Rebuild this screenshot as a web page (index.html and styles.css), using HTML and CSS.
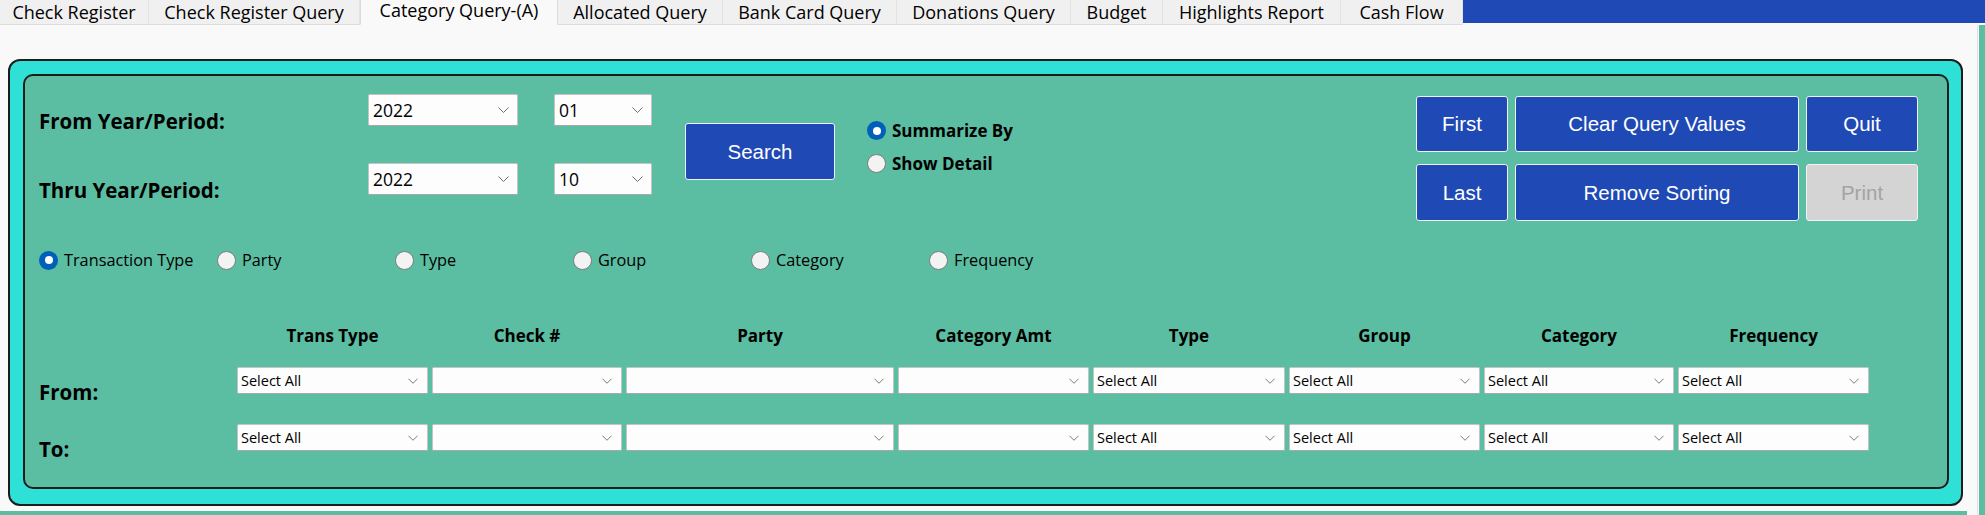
FILE: index.html
```html
<!DOCTYPE html>
<html>
<head>
<meta charset="utf-8">
<title>Category Query</title>
<link rel="stylesheet" href="styles.css">
</head>
<body>
<div class="app">
  <nav class="tabbar">
    <div class="tab w1">Check Register</div>
    <div class="tab w2">Check Register Query</div>
    <div class="tab w3 active">Category Query-(A)</div>
    <div class="tab w4">Allocated Query</div>
    <div class="tab w5">Bank Card Query</div>
    <div class="tab w6">Donations Query</div>
    <div class="tab w7">Budget</div>
    <div class="tab w8">Highlights Report</div>
    <div class="tab w9">Cash Flow</div>
    <div class="tab-fill"></div>
  </nav>
  <div class="workspace">
    <div class="stage">
      <section class="outer">
        <div class="inner">
          <div class="top-row">
            <div class="period-grid">
              <div class="big-label">From Year/Period:</div>
              <div class="select lg"><span>2022</span><svg class="chev" viewBox="0 0 11 6"><path d="M.5 .5 5.5 5.5 10.5 .5"/></svg></div>
              <div class="select lg"><span>01</span><svg class="chev" viewBox="0 0 11 6"><path d="M.5 .5 5.5 5.5 10.5 .5"/></svg></div>
              <div class="big-label">Thru Year/Period:</div>
              <div class="select lg"><span>2022</span><svg class="chev" viewBox="0 0 11 6"><path d="M.5 .5 5.5 5.5 10.5 .5"/></svg></div>
              <div class="select lg"><span>10</span><svg class="chev" viewBox="0 0 11 6"><path d="M.5 .5 5.5 5.5 10.5 .5"/></svg></div>
            </div>
            <button class="btn search-btn">Search</button>
            <div class="view-radios">
              <label class="radio-item bold"><span class="radio on"></span>Summarize By</label>
              <label class="radio-item bold"><span class="radio"></span>Show Detail</label>
            </div>
            <div class="btn-grid">
              <button class="btn">First</button>
              <button class="btn">Clear Query Values</button>
              <button class="btn">Quit</button>
              <button class="btn">Last</button>
              <button class="btn">Remove Sorting</button>
              <button class="btn disabled">Print</button>
            </div>
          </div>

          <div class="group-radios">
            <label class="radio-item"><span class="radio on"></span>Transaction Type</label>
            <label class="radio-item"><span class="radio"></span>Party</label>
            <label class="radio-item"><span class="radio"></span>Type</label>
            <label class="radio-item"><span class="radio"></span>Group</label>
            <label class="radio-item"><span class="radio"></span>Category</label>
            <label class="radio-item"><span class="radio"></span>Frequency</label>
          </div>

          <div class="filters">
            <div class="filter-grid head-row">
              <div></div>
              <div class="col-head">Trans Type</div>
              <div class="col-head">Check #</div>
              <div class="col-head">Party</div>
              <div class="col-head">Category Amt</div>
              <div class="col-head">Type</div>
              <div class="col-head">Group</div>
              <div class="col-head">Category</div>
              <div class="col-head">Frequency</div>
            </div>
            <div class="filter-grid sel-row from-row">
              <div class="row-label">From:</div>
              <div class="select sm"><span>Select All</span><svg class="chev" viewBox="0 0 11 6"><path d="M.5 .5 5.5 5.5 10.5 .5"/></svg></div>
              <div class="select sm"><span></span><svg class="chev" viewBox="0 0 11 6"><path d="M.5 .5 5.5 5.5 10.5 .5"/></svg></div>
              <div class="select sm"><span></span><svg class="chev" viewBox="0 0 11 6"><path d="M.5 .5 5.5 5.5 10.5 .5"/></svg></div>
              <div class="select sm"><span></span><svg class="chev" viewBox="0 0 11 6"><path d="M.5 .5 5.5 5.5 10.5 .5"/></svg></div>
              <div class="select sm"><span>Select All</span><svg class="chev" viewBox="0 0 11 6"><path d="M.5 .5 5.5 5.5 10.5 .5"/></svg></div>
              <div class="select sm"><span>Select All</span><svg class="chev" viewBox="0 0 11 6"><path d="M.5 .5 5.5 5.5 10.5 .5"/></svg></div>
              <div class="select sm"><span>Select All</span><svg class="chev" viewBox="0 0 11 6"><path d="M.5 .5 5.5 5.5 10.5 .5"/></svg></div>
              <div class="select sm"><span>Select All</span><svg class="chev" viewBox="0 0 11 6"><path d="M.5 .5 5.5 5.5 10.5 .5"/></svg></div>
            </div>
            <div class="filter-grid sel-row to-row">
              <div class="row-label">To:</div>
              <div class="select sm"><span>Select All</span><svg class="chev" viewBox="0 0 11 6"><path d="M.5 .5 5.5 5.5 10.5 .5"/></svg></div>
              <div class="select sm"><span></span><svg class="chev" viewBox="0 0 11 6"><path d="M.5 .5 5.5 5.5 10.5 .5"/></svg></div>
              <div class="select sm"><span></span><svg class="chev" viewBox="0 0 11 6"><path d="M.5 .5 5.5 5.5 10.5 .5"/></svg></div>
              <div class="select sm"><span></span><svg class="chev" viewBox="0 0 11 6"><path d="M.5 .5 5.5 5.5 10.5 .5"/></svg></div>
              <div class="select sm"><span>Select All</span><svg class="chev" viewBox="0 0 11 6"><path d="M.5 .5 5.5 5.5 10.5 .5"/></svg></div>
              <div class="select sm"><span>Select All</span><svg class="chev" viewBox="0 0 11 6"><path d="M.5 .5 5.5 5.5 10.5 .5"/></svg></div>
              <div class="select sm"><span>Select All</span><svg class="chev" viewBox="0 0 11 6"><path d="M.5 .5 5.5 5.5 10.5 .5"/></svg></div>
              <div class="select sm"><span>Select All</span><svg class="chev" viewBox="0 0 11 6"><path d="M.5 .5 5.5 5.5 10.5 .5"/></svg></div>
            </div>
          </div>
        </div>
      </section>
      <div class="bottom-line"></div>
    </div>
    <div class="right-strip"></div>
  </div>
</div>
</body>
</html>
```

FILE: styles.css
```css
* { box-sizing: border-box; }
html, body { margin: 0; padding: 0; }
body {
  width: 1985px;
  height: 515px;
  overflow: hidden;
  background: #f9f9f9;
  font-family: "Open Sans", "Noto Sans", sans-serif;
  color: #000;
}
.app { display: flex; flex-direction: column; height: 515px; }

/* Tabs */
.tabbar { display: flex; height: 25px; flex: none; }
.tab {
  height: 25px;
  line-height: 24px;
  font-size: 18px;
  text-align: center;
  white-space: nowrap;
  background: #f0f0f0;
  border-right: 1px solid #e3e3e3;
  border-bottom: 1px solid #dcdcdc;
}
.tab.active {
  background: #f9f9f9;
  border-bottom-color: #f9f9f9;
  border-left: 1px solid #dcdcdc;
  border-right: 1px solid #dcdcdc;
  line-height: 21px;
}
.w1 { width: 149px; }
.w2 { width: 211px; }
.w3 { width: 198px; }
.w4 { width: 165px; }
.w5 { width: 174px; }
.w6 { width: 174px; }
.w7 { width: 92px; }
.w8 { width: 178px; }
.w9 { width: 122px; }
.tab-fill { flex: 1; height: 23px; background: #1f49b5; }

/* Workspace */
.workspace { flex: 1; display: flex; min-height: 0; }
.stage { flex: 1; display: flex; flex-direction: column; padding-top: 34px; }
.right-strip {
  width: 8px;
  flex: none;
  border-left: 1px solid #e2e2e2;
  background: linear-gradient(to right, #f9f9f9 1px, #5bbda1 1px);
}
.outer {
  margin-left: 8px;
  width: 1955px;
  height: 448px;
  background: #2ee0d5;
  border: 2px solid #1c1c1c;
  border-radius: 12px;
  padding: 13px 12px 15px 13px;
}
.bottom-line {
  margin-top: 5px;
  width: 1967px;
  height: 4px;
  background: #5bbda1;
}
.inner {
  height: 100%;
  background: #5bbda1;
  border: 2px solid #1c1c1c;
  border-radius: 10px;
  padding: 18px 29px 0 14px;
  display: flex;
  flex-direction: column;
}

/* Top row */
.top-row { display: flex; align-items: flex-start; }
.period-grid {
  display: grid;
  grid-template-columns: 293px 150px 98px;
  grid-template-rows: 32px 32px;
  column-gap: 36px;
  row-gap: 37px;
}
.big-label {
  font-weight: 700;
  font-size: 20.5px;
  line-height: 32px;
  padding-top: 11px;
  white-space: nowrap;
}

.select {
  display: flex;
  align-items: center;
  justify-content: space-between;
  background: #fdfdfd;
  border: 1px solid #c4c4c4;
  border-bottom-color: #a9a9a9;
  border-radius: 2px;
  white-space: nowrap;
}
.select.lg { font-size: 17.5px; padding: 0 8px 0 4px; height: 32px; }
.select.sm { font-size: 14.5px; padding: 0 9px 0 3px; height: 27px; }
.chev { width: 11px; height: 6px; flex: none; fill: none; stroke: #6e6e6e; stroke-width: 1; }
.select.sm .chev { width: 10px; height: 6px; }

.btn {
  margin: 0;
  background: #1f49b5;
  color: #fff;
  border: 1px solid #eef2f6;
  border-radius: 3px;
  font-family: "Liberation Sans", Arial, sans-serif;
  font-size: 20.5px;
  padding: 0;
}
.btn.disabled { background: #d4d4d4; color: #a3a3a3; border-color: #f2f2f2; }
.search-btn { margin-left: 33px; margin-top: 29px; width: 150px; height: 57px; }

.view-radios { margin-left: 32px; margin-top: 20px; display: flex; flex-direction: column; }
.view-radios .radio-item { height: 33px; }

.btn-grid {
  margin-left: auto;
  margin-top: 2px;
  display: grid;
  grid-template-columns: 92px 284px 112px;
  grid-template-rows: 56px 57px;
  column-gap: 7px;
  row-gap: 12px;
}

/* Radios */
.radio-item {
  display: flex;
  align-items: center;
  gap: 6px;
  font-size: 16.3px;
  white-space: nowrap;
}
.radio-item.bold { font-weight: 700; font-size: 17px; }
.radio {
  width: 19px;
  height: 19px;
  flex: none;
  border-radius: 50%;
  background: #f3f3f3;
  border: 1px solid #7d7d7d;
}
.radio.on {
  border: none;
  background: #005fb8;
  display: grid;
  place-items: center;
}
.radio.on::after {
  content: "";
  width: 8px;
  height: 8px;
  border-radius: 50%;
  background: #fff;
}

.group-radios {
  margin-top: 27px;
  display: grid;
  grid-template-columns: repeat(6, 178px);
  height: 24px;
}

/* Filters */
.filters { margin-top: 52px; display: flex; flex-direction: column; }
.filter-grid {
  display: grid;
  grid-template-columns: 194px 191px 190px 268px 191px 192px 191px 190px 191px;
  column-gap: 4px;
}
.head-row { grid-template-rows: 24px; }
.col-head { font-weight: 700; font-size: 17px; line-height: 24px; text-align: center; white-space: nowrap; }
.sel-row { grid-template-rows: 27px; }
.from-row { margin-top: 19px; }
.to-row { margin-top: 30px; }
.row-label {
  align-self: start;
  font-weight: 700;
  font-size: 20.5px;
  line-height: 24px;
  padding-top: 13px;
}
```
